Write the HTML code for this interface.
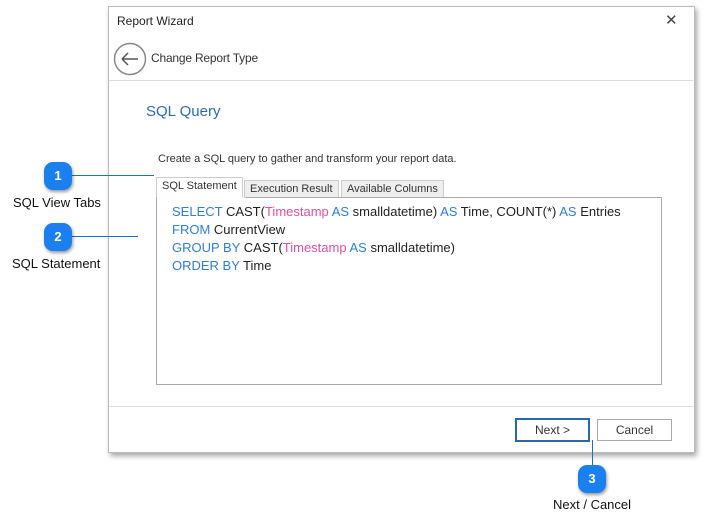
<!DOCTYPE html><html><head><style>
body{margin:0;width:704px;height:529px;background:#fff;position:relative;font-family:"Liberation Sans",sans-serif;overflow:hidden}
.a{position:absolute}
.dlg{left:108px;top:6px;width:585px;height:445px;background:#fff;border:1px solid #bbb;box-shadow:2px 3px 5px rgba(0,0,0,.35)}
.badge{width:28px;height:28px;border-radius:9px;background:#1a80f0;color:#fff;font-size:13px;font-weight:bold;text-align:center;line-height:28px;box-shadow:1px 2px 3px rgba(0,0,0,.4)}
.lbl{font-size:13px;color:#111}
.kw{color:#2e7fd6}.pk{color:#e0509e}
.code{font-size:13px;line-height:18px;color:#222}
.tab{font-size:11px;color:#333;border:1px solid #ccc;background:#eee;height:16px;line-height:16px;padding:0 5px}
.btn{font-size:12px;text-align:center;color:#333;height:20px;line-height:20px}
</style></head><body>
<div class="a dlg"></div>
<div class="a" style="left:117px;top:14px;font-size:12px;color:#222">Report Wizard</div>
<div class="a" style="left:665px;top:11px;font-size:15px;color:#444">✕</div>
<svg class="a" style="left:113px;top:42px" width="34" height="34"><circle cx="17" cy="17" r="15.5" fill="none" stroke="#888" stroke-width="1.5"/><path d="M9 17H25M9 17L15 11M9 17L15 23" stroke="#555" stroke-width="1.5" fill="none"/></svg>
<div class="a" style="left:151px;top:51px;font-size:12px;color:#333;letter-spacing:-0.2px">Change Report Type</div>
<div class="a" style="left:109px;top:80px;width:584px;height:1px;background:#ddd"></div>
<div class="a" style="left:146px;top:103px;font-size:15px;color:#2b6cb0">SQL Query</div>
<div class="a" style="left:158px;top:153px;font-size:11px;color:#333">Create a SQL query to gather and transform your report data.</div>
<div class="a tab" style="left:156px;top:177px;background:#fff;border-bottom-color:#fff;height:19px">SQL Statement</div>
<div class="a tab" style="left:244px;top:180px">Execution Result</div>
<div class="a tab" style="left:341px;top:180px">Available Columns</div>
<div class="a" style="left:156px;top:197px;width:504px;height:187px;border:1px solid #aaa;border-top:none"></div>
<div class="a" style="left:246px;top:197px;width:415px;height:1px;background:#aaa"></div>
<div class="a code" style="left:172px;top:203px">
<div><span class="kw">SELECT</span> CAST(<span class="pk">Timestamp</span> <span class="kw">AS</span> smalldatetime) <span class="kw">AS</span> Time, COUNT(*) <span class="kw">AS</span> Entries</div>
<div><span class="kw">FROM</span> CurrentView</div>
<div><span class="kw">GROUP BY</span> CAST(<span class="pk">Timestamp</span> <span class="kw">AS</span> smalldatetime)</div>
<div><span class="kw">ORDER BY</span> Time</div></div>
<div class="a" style="left:109px;top:406px;width:584px;height:1px;background:#ddd"></div>
<div class="a btn" style="left:515px;top:418px;width:71px;border:2px solid #2a68a8">Next &gt;</div>
<div class="a btn" style="left:597px;top:419px;width:73px;border:1px solid #aaa">Cancel</div>
<div class="a" style="left:72px;top:175px;width:82px;height:1px;background:#1a6fd0"></div>
<div class="a" style="left:72px;top:236px;width:66px;height:1px;background:#1a6fd0"></div>
<div class="a" style="left:592px;top:440px;width:1px;height:26px;background:#1a6fd0"></div>
<div class="a badge" style="left:44px;top:162px">1</div>
<div class="a badge" style="left:44px;top:223px">2</div>
<div class="a badge" style="left:578px;top:465px">3</div>
<div class="a lbl" style="left:13px;top:195px">SQL View Tabs</div>
<div class="a lbl" style="left:12px;top:256px">SQL Statement</div>
<div class="a lbl" style="left:553px;top:497px">Next / Cancel</div>
</body></html>
